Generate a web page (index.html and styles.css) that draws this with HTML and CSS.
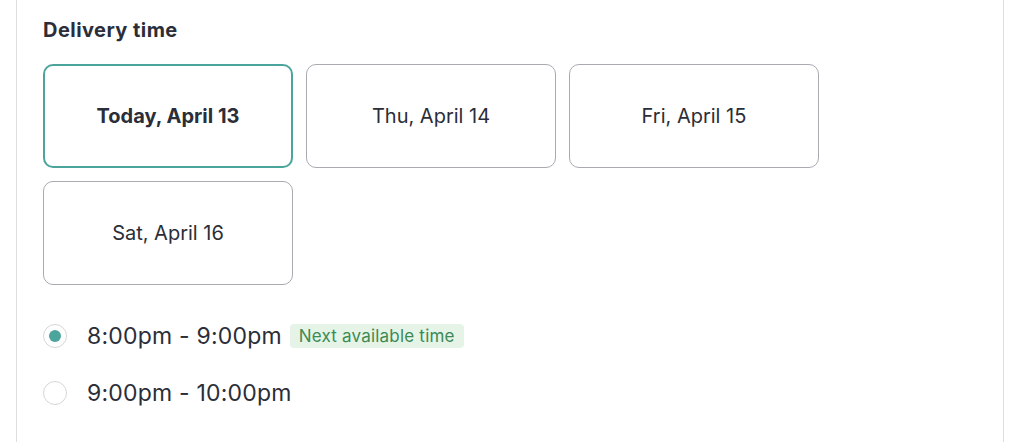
FILE: index.html
```html
<html>
    <head>
        <meta name="viewport" content="width=device-width, initial-scale=1">
        <title>Delivery time</title>
        <link rel="stylesheet" href="styles.css">
    </head>
    <body>
        <div class="panel">
            <h2 class="title">Delivery time</h2>
            <div class="day-list">
                <div class="day-card active">Today, April 13</div>
                <div class="day-card">Thu, April 14</div>
                <div class="day-card">Fri, April 15</div>
                <div class="day-card">Sat, April 16</div>
            </div>
            <div class="slot-list">
                <label class="slot">
                    <span class="radio checked"></span>
                    <span class="slot-text">8:00pm - 9:00pm</span>
                    <span class="badge">Next available time</span>
                </label>
                <label class="slot">
                    <span class="radio"></span>
                    <span class="slot-text">9:00pm - 10:00pm</span>
                </label>
            </div>
        </div>
    </body>
</html>
```

FILE: styles.css
```css
body {
    margin: 0;
    background: #fff;
    font-family: Inter, "Noto Sans", sans-serif;
    color: #2b2e38;
}
.panel {
    margin-left: 16px;
    width: 988px;
    height: 442px;
    border-left: 1px solid #dedede;
    border-right: 1px solid #dedede;
    padding: 17px 0 0 26px;
    box-sizing: border-box;
}
.title {
    margin: 0;
    font-size: 20px;
    font-weight: 700;
    line-height: 26px;
    letter-spacing: 0.45px;
}
.day-list {
    margin-top: 21px;
    display: grid;
    grid-template-columns: repeat(3, 250px);
    gap: 13px 13px;
}
.day-card {
    height: 104px;
    box-sizing: border-box;
    border: 1px solid #a9abb0;
    border-radius: 10px;
    display: flex;
    align-items: center;
    justify-content: center;
    font-size: 20px;
}
.day-card.active {
    border: 2px solid #4ba59d;
    font-weight: 700;
}
.slot-list {
    margin-top: 35px;
}
.slot {
    display: flex;
    align-items: center;
    height: 32px;
    margin-bottom: 25px;
}
.radio {
    width: 24px;
    height: 24px;
    box-sizing: border-box;
    border: 1px solid #d5d6d9;
    border-radius: 50%;
    margin: 0 20px 0 0;
    display: flex;
    align-items: center;
    justify-content: center;
}
.radio.checked::after {
    content: "";
    width: 12px;
    height: 12px;
    border-radius: 50%;
    background: #4ba59d;
}
.slot-text {
    font-size: 23px;
    letter-spacing: 0.2px;
}
.badge {
    margin-left: 8px;
    background: #e5f4e7;
    color: #3c8a55;
    font-size: 17px;
    letter-spacing: 0.2px;
    padding: 0 9px;
    height: 24px;
    line-height: 24px;
    border-radius: 4px;
}
```
